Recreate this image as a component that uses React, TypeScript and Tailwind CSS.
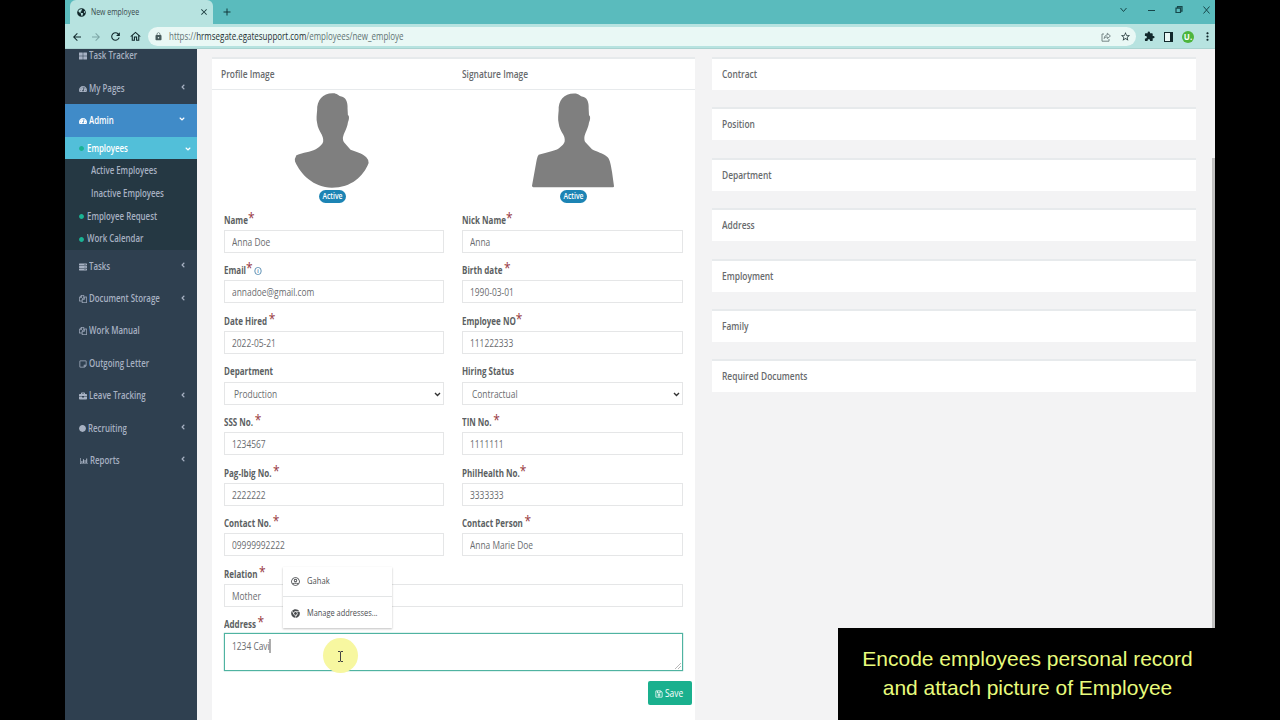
import type { ReactNode } from "react"
import {
  FaAngleDown,
  FaAngleLeft,
  FaBriefcase,
  FaChrome,
  FaCircle,
  FaGlobeAmericas,
  FaRegSave,
  FaRegStickyNote,
  FaRegUserCircle,
  FaServer,
  FaTachometerAlt,
  FaThLarge,
} from "react-icons/fa"
import {
  MdAdd,
  MdArrowBack,
  MdArrowForward,
  MdClose,
  MdExtension,
  MdLock,
  MdMoreVert,
  MdOutlineHome,
  MdRefresh,
  MdStarBorder,
} from "react-icons/md"

// horizontally condensed text, the footprint stays the natural one
function Narrow({ children, className = "scale-x-[.8]" }: { children: ReactNode; className?: string }) {
  return <span className={`inline-block origin-left whitespace-nowrap ${className}`}>{children}</span>
}

function FilesIcon({ className }: { className?: string }) {
  return (
    <svg className={className} viewBox="0 0 1792 1792" fill="currentColor" stroke="currentColor" strokeWidth="50">
      <path d="M1696 384q40 0 68 28t28 68v1216q0 40-28 68t-68 28h-960q-40 0-68-28t-28-68v-288h-544q-40 0-68-28t-28-68v-672q0-40 20-88t48-76l408-408q28-28 76-48t88-20h416q40 0 68 28t28 68v328q68-40 128-40h416zm-544 213l-299 299h299v-299zm-640-384l-299 299h299v-299zm196 647l316-316v-416h-384v416q0 40-28 68t-68 28h-416v640h512v-256q0-40 20-88t48-76zm956 804v-1152h-384v416q0 40-28 68t-68 28h-416v640h896z" />
    </svg>
  )
}

function ChartIcon({ className }: { className?: string }) {
  return (
    <svg className={`${className} ml-px`} viewBox="0 0 18 16" fill="currentColor">
      <path d="M0 1h1.5v12.5H18V15H0zM3 8h2.4v4.5H3zM6.6 4H9v8.5H6.6zM10.2 6h2.4v6.5h-2.4zM13.8 2.5h2.4v10h-2.4z" />
    </svg>
  )
}

function DotIcon() {
  return <FaCircle className="mr-[2px] size-[7px] shrink-0" />
}

function BrowserBar() {
  return (
    <header className="shrink-0">
      <div className="flex h-6 bg-[#5abbbd] pl-[5px]">
        <div className="relative flex w-[143px] items-center rounded-t-md bg-[#b7e3e0] pl-[7px] text-[9.5px] text-[#37494b]">
          <FaGlobeAmericas className="mr-[5px] size-[9px] text-[#12282b]" />
          <Narrow className="scale-x-[.73]">New employee</Narrow>
          <MdClose className="absolute right-[4px] size-[10px] text-[#17373a]" />
        </div>
        <MdAdd className="mt-[6px] ml-[8px] size-3 text-[#12383b]" />
        <div className="ml-auto flex items-start pt-[5px] text-[#17474a]">
          <svg className="mr-[19px] size-[9px]" viewBox="0 0 9 9" fill="none" stroke="currentColor">
            <path d="M2.5 3 5.5 6.5 8.5 3" />
          </svg>
          <svg className="mr-[19px] size-[9px]" viewBox="0 0 9 9" fill="none" stroke="currentColor">
            <path d="M2 5.5h7" />
          </svg>
          <svg className="mr-[19px] size-[9px]" viewBox="0 0 9 9" fill="none" stroke="currentColor" strokeWidth="1.2">
            <path d="M2 3.2h4.500v4.300H2zM3.500 3V1.700h4.500v4.400H6.500" />
          </svg>
          <svg className="mr-[4px] size-[9px]" viewBox="0 0 9 9" fill="none" stroke="currentColor">
            <path d="m1.5 1.5 6 7M7.5 1.5l-6 7" />
          </svg>
        </div>
      </div>
      <div className="flex h-[25px] items-center border-b border-[#a9d3d0] bg-[#b7e3e0] pt-px pl-[6px] text-[#11282b]">
        <MdArrowBack className="size-3" />
        <MdArrowForward className="ml-[7px] size-3 text-[#7da5a5]" />
        <MdRefresh className="ml-[7px] size-[13px]" />
        <MdOutlineHome className="ml-[7px] size-[13px]" />
        <div className="ml-[6px] flex h-[19px] w-[988px] items-center rounded-full bg-[#e9f8f5] pl-[6px] text-[10.5px] text-[#5f7373]">
          <MdLock className="mr-[6px] size-[9px] text-[#475b5c]" />
          <Narrow className="scale-x-[.76]">
            https://<span className="text-[#1d3032]">hrmsegate.egatesupport.com</span>/employees/new_employe
          </Narrow>
          <svg
            className="mr-[9px] ml-auto size-[10px] text-[#6a7b7c]"
            viewBox="0 0 10 10"
            fill="none"
            stroke="currentColor"
            strokeWidth=".9"
          >
            <path d="M3 2H1v7.2h7V7M3.2 6.5C3.4 4 4.8 3 6.3 3V1.2L9.4 4 6.3 6.6V4.9C5 4.9 4 5.4 3.2 6.5Z" />
          </svg>
          <MdStarBorder className="mr-[5px] size-[11px] text-[#2d4143]" />
        </div>
        <MdExtension className="ml-[8px] size-[11px]" />
        <span className="ml-[9px] h-[10px] w-[9px] border-[1.5px] border-r-[3px] border-[#11282b] bg-[#e9f8f5]" />
        <span className="ml-[9px] flex size-3 items-center justify-center rounded-full bg-[#4db53c] text-[8px] font-bold text-white">
          U.
        </span>
        <MdMoreVert className="ml-[7px] size-[13px]" />
      </div>
    </header>
  )
}

const menu = [
  { label: "Tasks", icon: FaServer, arrow: true },
  { label: "Document Storage", icon: FilesIcon, arrow: true },
  { label: "Work Manual", icon: FilesIcon },
  { label: "Outgoing Letter", icon: FaRegStickyNote },
  { label: "Leave Tracking", icon: FaBriefcase, arrow: true },
  { label: "Recruiting", icon: DotIcon, arrow: true },
  { label: "Reports", icon: ChartIcon, arrow: true },
]

function Sidebar() {
  return (
    <nav className="w-[131.5px] shrink-0 bg-[#2f4050] text-[10.5px] font-semibold text-[#a7b1c2]">
      <div className="flex h-[14px] items-center pl-[14px]">
        <FaThLarge className="mr-[2px] size-2 shrink-0" />
        <Narrow className="scale-x-[.75]">Task Tracker</Narrow>
      </div>
      <div className="mt-[9px] flex h-8 items-center pt-px pl-[14px]">
        <FaTachometerAlt className="mr-[2px] size-2 shrink-0" />
        <Narrow className="scale-x-[.75]">My Pages</Narrow>
        <FaAngleLeft className="mr-[10px] mb-1 ml-auto size-2 shrink-0" />
      </div>
      <div className="flex h-[33px] items-center bg-[#408bc8] pl-[14px] text-white">
        <FaTachometerAlt className="mr-[2px] size-2 shrink-0" />
        <Narrow className="scale-x-[.75]">Admin</Narrow>
        <FaAngleDown className="mr-[11px] mb-1 ml-auto size-2 shrink-0" />
      </div>
      <div className="flex h-[22px] items-center bg-[#52bfd9] pt-px pl-[14px] text-white">
        <FaCircle className="mr-[3px] size-[5px] text-[#1ab394]" />
        <Narrow className="scale-x-[.75]">Employees</Narrow>
        <FaAngleDown className="mr-[5px] ml-auto size-2 shrink-0" />
      </div>
      <div className="flex h-[91px] flex-col bg-[#253843]">
        <div className="flex h-[23px] items-center pl-[26px]">
          <Narrow className="scale-x-[.75]">Active Employees</Narrow>
        </div>
        <div className="flex h-[23px] items-center pl-[26px]">
          <Narrow className="scale-x-[.75]">Inactive Employees</Narrow>
        </div>
        <div className="flex h-[23px] items-center pl-[14px]">
          <FaCircle className="mr-[3px] size-[5px] text-[#1ab394]" />
          <Narrow className="scale-x-[.75]">Employee Request</Narrow>
        </div>
        <div className="flex h-[22px] items-center pl-[14px]">
          <FaCircle className="mr-[3px] size-[5px] text-[#1ab394]" />
          <Narrow className="scale-x-[.75]">Work Calendar</Narrow>
        </div>
      </div>
      {menu.map(({ label, icon: Icon, arrow }) => (
        <div key={label} className="flex h-[32.35px] items-center pt-px pl-[14px]">
          <Icon className="mr-[2px] size-2 shrink-0" />
          <Narrow className="w-20 scale-x-[.75]">{label}</Narrow>
          {arrow && <FaAngleLeft className="mr-[10px] mb-[3px] ml-auto size-2 shrink-0" />}
        </div>
      ))}
    </nav>
  )
}

type FieldProps = {
  label: string
  value: string
  star?: "tight" | "spaced"
  select?: boolean
  info?: boolean
}

function Field({ label, value, star, select, info }: FieldProps) {
  return (
    <div className="min-w-0 flex-1">
      <div className="flex h-[21px] items-center text-[10px] font-bold text-[#5c5f62]">
        <Narrow>
          {label}
          {star && (
            <span
              className={`relative -top-px text-[15px] leading-none font-normal text-[#993a3f] ${star === "spaced" ? "ml-[2px]" : ""}`}
            >
              *
            </span>
          )}
          {info && (
            <span className="relative -top-px ml-[2px] inline-flex h-[8px] w-[9px] items-center justify-center rounded-full border border-[#4f86ad] text-[6px] leading-none text-[#4f86ad]">
              i
            </span>
          )}
        </Narrow>
      </div>
      <div
        className={`flex h-[23px] items-center border border-[#e5e6e7] bg-white pt-[2px] text-[10.5px] text-[#6a6c6f] ${select ? "pl-[9px]" : "pl-[7px]"}`}
      >
        <Narrow>{value}</Narrow>
        {select && (
          <svg
            className="mr-[2px] ml-auto h-[5px] w-[7px] text-[#333]"
            viewBox="0 0 7 5"
            fill="none"
            stroke="currentColor"
            strokeWidth="1.4"
          >
            <path d="m1 1 2.5 2.5L6 1" />
          </svg>
        )}
      </div>
    </div>
  )
}

function Avatar({ square }: { square?: boolean }) {
  return (
    <div className="flex flex-1 flex-col items-center">
      {square ? (
        <svg className="h-[97px] w-[84px] fill-[#7f7f7f]" viewBox="244 125 252 290">
          <path d="M373 129C386 128 390 136 397 138C412 140 418 154 417 175L418 194C423 196 422 208 418 216C416 234 405 248 404 262C404 270 405 273 408 276L427 296C441 304 460 307 474 320C481 327 484 346 487 364L493 407Q493 410 490 410H251Q247 410 247 406L258 345C261 330 262 319 267 313C289 305 313 303 328 293Q343 282 345 273C346 264 344 260 341 253C333 239 329 232 327 218C324 205 326 192 327 180C325 151 343 129 373 129Z" />
        </svg>
      ) : (
        <svg className="h-[97px] w-[77px] fill-[#7f7f7f]" viewBox="265 125 230 290">
          <path d="M383 129C396 128 400 136 407 138C422 140 429 154 428 175L429 194C434 196 433 208 429 216C427 234 416 248 414 262C414 269 415 272 418 276L437 298C454 305 470 307 484 320Q491 327 491 337C476 376 440 411 381 411C326 410 288 372 271 333Q269 324 275 314C297 305 315 305 333 296Q353 284 355 274C356 265 354 260 351 253C343 239 339 232 337 218C334 205 336 192 337 180C336 150 354 129 383 129Z" />
        </svg>
      )}
      <span className="mt-px ml-[2px] flex h-[13px] w-[27px] items-center justify-center rounded-full bg-[#1c84b4] text-[8.5px] font-semibold text-white">
        <span className="scale-x-[.8]">Active</span>
      </span>
    </div>
  )
}

function EmployeeForm() {
  return (
    <section className="mt-2 flex w-[483.5px] flex-col border-t-2 border-[#e7eaec] bg-white text-[#676a6c]">
      <div className="flex h-[31px] items-center border-b border-[#e7eaec] pt-px pl-[9px] text-[10.5px] font-semibold">
        <div className="w-[241.5px]">
          <Narrow>Profile Image</Narrow>
        </div>
        <Narrow>Signature Image</Narrow>
      </div>
      <div className="flex pt-[2px] pr-[2px]">
        <Avatar />
        <Avatar square />
      </div>
      <div className="flex flex-col px-3 pt-[6px]">
        <div className="flex gap-[18px]">
          <Field label="Name" value="Anna Doe" star="tight" />
          <Field label="Nick Name" value="Anna" star="tight" />
        </div>
        <div className="mt-[6px] flex gap-[18px]">
          <Field label="Email" value="annadoe@gmail.com" star="tight" info />
          <Field label="Birth date" value="1990-03-01" star="spaced" />
        </div>
        <div className="mt-[7px] flex gap-[18px]">
          <Field label="Date Hired" value="2022-05-21" star="spaced" />
          <Field label="Employee NO" value="111222333" star="tight" />
        </div>
        <div className="mt-[7px] flex gap-[18px]">
          <Field label="Department" value="Production" select />
          <Field label="Hiring Status" value="Contractual" select />
        </div>
        <div className="mt-[6px] flex gap-[18px]">
          <Field label="SSS No." value="1234567" star="spaced" />
          <Field label="TIN No." value="1111111" star="spaced" />
        </div>
        <div className="mt-[7px] flex gap-[18px]">
          <Field label="Pag-Ibig No." value="2222222" star="spaced" />
          <Field label="PhilHealth No." value="3333333" star="tight" />
        </div>
        <div className="mt-[6px] flex gap-[18px]">
          <Field label="Contact No." value="09999992222" star="spaced" />
          <Field label="Contact Person" value="Anna Marie Doe" star="spaced" />
        </div>
        <div className="relative mt-[7px] flex">
          <Field label="Relation" value="Mother" star="spaced" />
          <div className="absolute top-[4px] left-[59px] w-[109px] bg-white text-[9.5px] text-[#4a4d50] shadow-[0_1px_2px_rgba(0,0,0,0.25)]">
            <div className="flex h-[30px] items-center border-b border-[#e3e5e6] pl-[8px]">
              <FaRegUserCircle className="mr-[7px] size-[9px] shrink-0" />
              <Narrow>Gahak</Narrow>
            </div>
            <div className="flex h-[31px] items-center pt-px pl-[8px]">
              <FaChrome className="mr-[7px] size-[9px] shrink-0" />
              <Narrow className="scale-x-[.78]">Manage addresses...</Narrow>
            </div>
          </div>
        </div>
        <div className="mt-[6px] flex h-[20px] items-center text-[10px] font-bold text-[#5c5f62]">
          <Narrow>
            Address
            <span className="relative -top-px ml-[2px] text-[15px] leading-none font-normal text-[#993a3f]">*</span>
          </Narrow>
        </div>
        <div className="relative flex h-[38px] border border-[#4fb3a1] bg-white pt-[5px] pl-[7px] text-[10.5px] text-[#6a6c6f] shadow-[0_0_1px_#4fb3a1]">
          <Narrow className="h-[14px] scale-x-[.8] border-r border-[#333] leading-[14px]">1234 Cavi</Narrow>
          <span className="absolute top-[4px] left-[98px] size-[35px] rounded-full bg-[#f7f7a0]" />
          <svg
            className="absolute top-[16px] left-[112px] h-[13px] w-[7px] text-[#444]"
            viewBox="0 0 7 13"
            fill="none"
            stroke="currentColor"
          >
            <path d="M1 1.5h2l.5.5.5-.5h2M3.5 2v9M1 11.5h2l.5-.5.5.5h2" />
          </svg>
          <svg className="absolute right-px bottom-px size-[6px] text-[#999]" viewBox="0 0 6 6" stroke="currentColor">
            <path d="M0 6 6 0M3 6l3-3" strokeWidth=".7" />
          </svg>
        </div>
      </div>
      <button className="mt-[10px] mr-[3px] flex h-[24px] w-[44px] items-center self-end rounded-[2px] bg-[#1ab08e] pt-px pl-[7px] text-[10.5px] text-white">
        <FaRegSave className="mr-[2px] size-[8px] shrink-0" />
        <Narrow>Save</Narrow>
      </button>
    </section>
  )
}

const panels = [
  { title: "Contract", gap: "mb-[17px]" },
  { title: "Position", gap: "mb-[18px]" },
  { title: "Department", gap: "mb-[17px]" },
  { title: "Address", gap: "mb-[18px]" },
  { title: "Employment", gap: "mb-[17px]" },
  { title: "Family", gap: "mb-[17px]" },
  { title: "Required Documents", gap: "" },
]

export default function App() {
  return (
    <div className="relative h-[720px] w-[1280px] overflow-hidden bg-black px-[65px] font-['Open_Sans',sans-serif]">
      <div className="flex h-full flex-col">
        <BrowserBar />
        <main className="flex min-h-0 flex-1 bg-[#f3f3f4]">
          <Sidebar />
          <div className="flex flex-1 pl-[15px]">
            <EmployeeForm />
            <div className="mt-2 ml-[17px] w-[484px]">
              {panels.map((panel) => (
                <div
                  key={panel.title}
                  className={`flex h-[33px] items-center border-t-2 border-[#e7eaec] bg-white pl-[9.5px] text-[10.5px] font-semibold text-[#676a6c] ${panel.gap}`}
                >
                  <Narrow>{panel.title}</Narrow>
                </div>
              ))}
            </div>
            <div className="mt-[109px] ml-auto w-[3px] bg-[#c1c1c1]" />
          </div>
        </main>
      </div>
      <div className="absolute right-0 bottom-0 flex h-[92px] w-[442px] flex-col items-center bg-black pt-[16px] pr-[63px] font-['Liberation_Sans',Arial,sans-serif] text-[21px] leading-[29px] whitespace-nowrap text-[#e8fb7c]">
        <p>Encode employees personal record</p>
        <p>and attach picture of Employee</p>
      </div>
    </div>
  )
}
